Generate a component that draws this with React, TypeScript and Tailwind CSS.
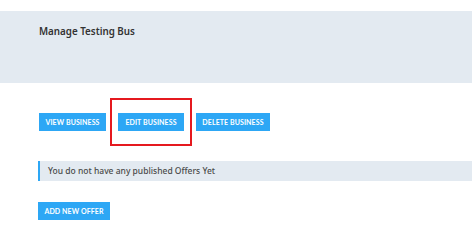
import React from 'react';

const btn =
  "h-[18px] flex items-center justify-center bg-[#2da7f5] text-white text-[7px] font-bold uppercase tracking-[0.1px] font-['Lato',sans-serif]";

export default function App() {
  return (
    <div className="w-[474px] h-[246px] bg-white pt-[11px] font-['Noto_Sans',sans-serif] overflow-hidden">
      {/* en-tête */}
      <div className="w-[472px] h-[72px] bg-[#e3eaf1] pl-[39px] pt-[14px]">
        <h1 className="text-[9.8px] font-semibold text-[#333] leading-[14px]">Manage Testing Bus</h1>
      </div>

      <div className="pl-[38px]">
        <div className="flex items-center gap-[12px] mt-[30px] ml-[1px]">
          <button className={`${btn} w-[67px]`}>View Business</button>
          <div className="relative">
            <button className={`${btn} w-[66px]`}>Edit Business</button>
            <div className="absolute -left-[8px] -right-[8px] -top-[15px] -bottom-[15px] border-2 border-[#e5191f]" />
          </div>
          <button className={`${btn} w-[74px]`}>Delete Business</button>
        </div>

        <div className="mt-[30px] w-[434px] h-[20px] bg-[#e3eaf1] border-l-2 border-[#2da7f5] flex items-center pl-[8px]">
          <span className="text-[8.5px] font-medium text-[#4a4a4a]">You do not have any published Offers Yet</span>
        </div>

        <button className={`${btn} w-[72px] mt-[21px]`}>Add New Offer</button>
      </div>
    </div>
  );
}
